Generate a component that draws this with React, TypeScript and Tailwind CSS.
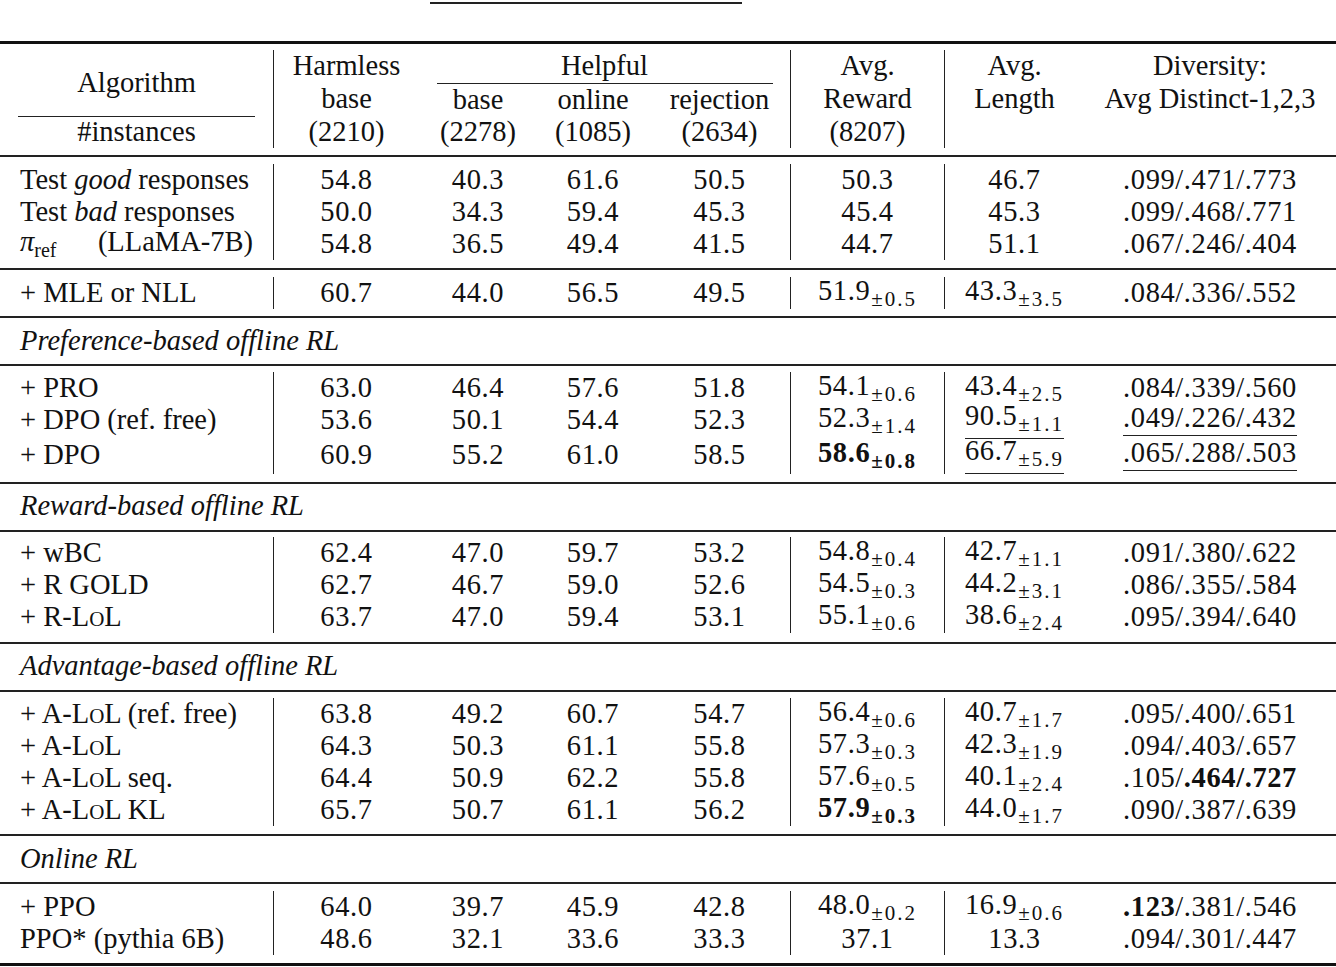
import React from "react"

type Cell = React.ReactNode

// value with a ± subscript, the way the paper prints it
function Pm({ v, s, bold }: { v: string; s: string; bold?: boolean }) {
  return (
    <span className={bold ? "font-bold" : ""}>
      {v}
      <span className="ml-[1px] align-[-6px] text-[21px] tracking-[2px]">±{s}</span>
    </span>
  )
}

function U({ children }: { children: React.ReactNode }) {
  return <span className="inline-block border-b-[1.5px] border-[#222] pb-[3px]">{children}</span>
}

function LoL() {
  return (
    <>
      L<span className="text-[21px]">O</span>L
    </>
  )
}

function Rule({ thick }: { thick?: boolean }) {
  return <div className={thick ? "h-[3px] bg-[#111]" : "h-[2px] bg-[#222]"} />
}

function Row({ c, tall }: { c: Cell[]; tall?: boolean }) {
  return (
    <div className={`flex ${tall ? "h-[38px]" : "h-[32px]"}`}>
      <div className="flex w-[273px] items-center pl-5">{c[0]}</div>
      <div className="flex w-[146px] items-center justify-center border-l border-[#222] tracking-[0.6px]">{c[1]}</div>
      <div className="flex w-[118px] items-center justify-center tracking-[0.6px]">{c[2]}</div>
      <div className="flex w-[112px] items-center justify-center tracking-[0.6px]">{c[3]}</div>
      <div className="flex w-[141px] items-center justify-center tracking-[0.6px]">{c[4]}</div>
      <div className="flex w-[154px] items-center justify-center border-l border-[#222] tracking-[0.6px]">{c[5]}</div>
      <div className="flex w-[140px] items-center justify-center border-l border-[#222] tracking-[0.6px]">{c[6]}</div>
      <div className="flex w-[252px] items-center justify-center tracking-[0.6px]">{c[7]}</div>
    </div>
  )
}

function Section({ title }: { title: string }) {
  return (
    <div className="flex h-[32px] items-center pl-5 italic">{title}</div>
  )
}

export default function App() {
  return (
    <div className="min-h-[967px] w-[1336px] overflow-hidden bg-white pt-[2px] font-['Liberation_Serif',serif] text-[28.5px] leading-none text-[#111]">
      <div className="ml-[430px] h-[2px] w-[312px] bg-[#222]" />
      <div className="mt-[37px]">
        <Rule thick />
      </div>

      {/* header */}
      <div className="flex pt-[6px] pb-[7px]">
        <div className="flex w-[273px] flex-col">
          <div className="flex h-[66px] items-center justify-center">Algorithm</div>
          <div className="mx-[18px] h-px bg-[#222]" />
          <div className="flex h-[31px] items-center justify-center">#instances</div>
        </div>
        <div className="flex w-[146px] flex-col border-l border-[#222]">
          <div className="flex h-[33px] items-center justify-center">Harmless</div>
          <div className="flex h-[33px] items-center justify-center">base</div>
          <div className="flex h-[32px] items-center justify-center">(2210)</div>
        </div>
        <div className="flex w-[371px] flex-col">
          <div className="flex h-[33px] items-center justify-center">Helpful</div>
          <div className="ml-[18px] mr-[17px] h-px bg-[#222]" />
          <div className="flex h-[32px]">
            <div className="flex w-[118px] items-center justify-center">base</div>
            <div className="flex w-[112px] items-center justify-center">online</div>
            <div className="flex w-[141px] items-center justify-center">rejection</div>
          </div>
          <div className="flex h-[32px]">
            <div className="flex w-[118px] items-center justify-center">(2278)</div>
            <div className="flex w-[112px] items-center justify-center">(1085)</div>
            <div className="flex w-[141px] items-center justify-center">(2634)</div>
          </div>
        </div>
        <div className="flex w-[154px] flex-col border-l border-[#222]">
          <div className="flex h-[33px] items-center justify-center">Avg.</div>
          <div className="flex h-[33px] items-center justify-center">Reward</div>
          <div className="flex h-[32px] items-center justify-center">(8207)</div>
        </div>
        <div className="flex w-[140px] flex-col border-l border-[#222]">
          <div className="flex h-[33px] items-center justify-center">Avg.</div>
          <div className="flex h-[32px] items-center justify-center">Length</div>
        </div>
        <div className="flex w-[252px] flex-col">
          <div className="flex h-[33px] items-center justify-center">Diversity:</div>
          <div className="flex h-[32px] items-center justify-center">Avg Distinct-1,2,3</div>
        </div>
      </div>
      <Rule />

      {/* references */}
      <div className="pt-[7px] pb-[8px]">
        <Row c={[<span>Test <i>good</i> responses</span>, "54.8", "40.3", "61.6", "50.5", "50.3", "46.7", ".099/.471/.773"]} />
        <Row c={[<span>Test <i>bad</i> responses</span>, "50.0", "34.3", "59.4", "45.3", "45.4", "45.3", ".099/.468/.771"]} />
        <Row
          c={[
            <span className="flex w-[233px] justify-between">
              <span>
                <i>π</i>
                <span className="align-[-6px] text-[20px]">ref</span>
              </span>
              <span>(LLaMA-7B)</span>
            </span>,
            "54.8", "36.5", "49.4", "41.5", "44.7", "51.1", ".067/.246/.404",
          ]}
        />
      </div>
      <Rule />

      <div className="pt-[7px] pb-[7px]">
        <Row c={["+ MLE or NLL", "60.7", "44.0", "56.5", "49.5", <Pm v="51.9" s="0.5" />, <Pm v="43.3" s="3.5" />, ".084/.336/.552"]} />
      </div>
      <Rule />

      <div className="pt-[7px] pb-[7px]">
        <Section title="Preference-based offline RL" />
      </div>
      <Rule />

      <div className="pt-[6px] pb-[8px]">
        <Row c={["+ PRO", "63.0", "46.4", "57.6", "51.8", <Pm v="54.1" s="0.6" />, <Pm v="43.4" s="2.5" />, ".084/.339/.560"]} />
        <Row c={["+ DPO (ref. free)", "53.6", "50.1", "54.4", "52.3", <Pm v="52.3" s="1.4" />, <U><Pm v="90.5" s="1.1" /></U>, <U>.049/.226/.432</U>]} />
        <Row tall c={["+ DPO", "60.9", "55.2", "61.0", "58.5", <Pm v="58.6" s="0.8" bold />, <U><Pm v="66.7" s="5.9" /></U>, <U>.065/.288/.503</U>]} />
      </div>
      <Rule />

      <div className="pt-[6px] pb-[8px]">
        <Section title="Reward-based offline RL" />
      </div>
      <Rule />

      <div className="pt-[5px] pb-[9px]">
        <Row c={["+ wBC", "62.4", "47.0", "59.7", "53.2", <Pm v="54.8" s="0.4" />, <Pm v="42.7" s="1.1" />, ".091/.380/.622"]} />
        <Row c={["+ R GOLD", "62.7", "46.7", "59.0", "52.6", <Pm v="54.5" s="0.3" />, <Pm v="44.2" s="3.1" />, ".086/.355/.584"]} />
        <Row c={[<span>+ R-<LoL /></span>, "63.7", "47.0", "59.4", "53.1", <Pm v="55.1" s="0.6" />, <Pm v="38.6" s="2.4" />, ".095/.394/.640"]} />
      </div>
      <Rule />

      <div className="pt-[6px] pb-[8px]">
        <Section title="Advantage-based offline RL" />
      </div>
      <Rule />

      <div className="pt-[6px] pb-[8px]">
        <Row c={[<span>+ A-<LoL /> (ref. free)</span>, "63.8", "49.2", "60.7", "54.7", <Pm v="56.4" s="0.6" />, <Pm v="40.7" s="1.7" />, ".095/.400/.651"]} />
        <Row c={[<span>+ A-<LoL /></span>, "64.3", "50.3", "61.1", "55.8", <Pm v="57.3" s="0.3" />, <Pm v="42.3" s="1.9" />, ".094/.403/.657"]} />
        <Row c={[<span>+ A-<LoL /> seq.</span>, "64.4", "50.9", "62.2", "55.8", <Pm v="57.6" s="0.5" />, <Pm v="40.1" s="2.4" />, <span>.105/<b>.464/.727</b></span>]} />
        <Row c={[<span>+ A-<LoL /> KL</span>, "65.7", "50.7", "61.1", "56.2", <Pm v="57.9" s="0.3" bold />, <Pm v="44.0" s="1.7" />, ".090/.387/.639"]} />
      </div>
      <Rule />

      <div className="pt-[7px] pb-[7px]">
        <Section title="Online RL" />
      </div>
      <Rule />

      <div className="pt-[7px] pb-[8px]">
        <Row c={["+ PPO", "64.0", "39.7", "45.9", "42.8", <Pm v="48.0" s="0.2" />, <Pm v="16.9" s="0.6" />, <span><b>.123</b>/.381/.546</span>]} />
        <Row c={["PPO* (pythia 6B)", "48.6", "32.1", "33.6", "33.3", "37.1", "13.3", ".094/.301/.447"]} />
      </div>
      <Rule thick />
    </div>
  )
}
